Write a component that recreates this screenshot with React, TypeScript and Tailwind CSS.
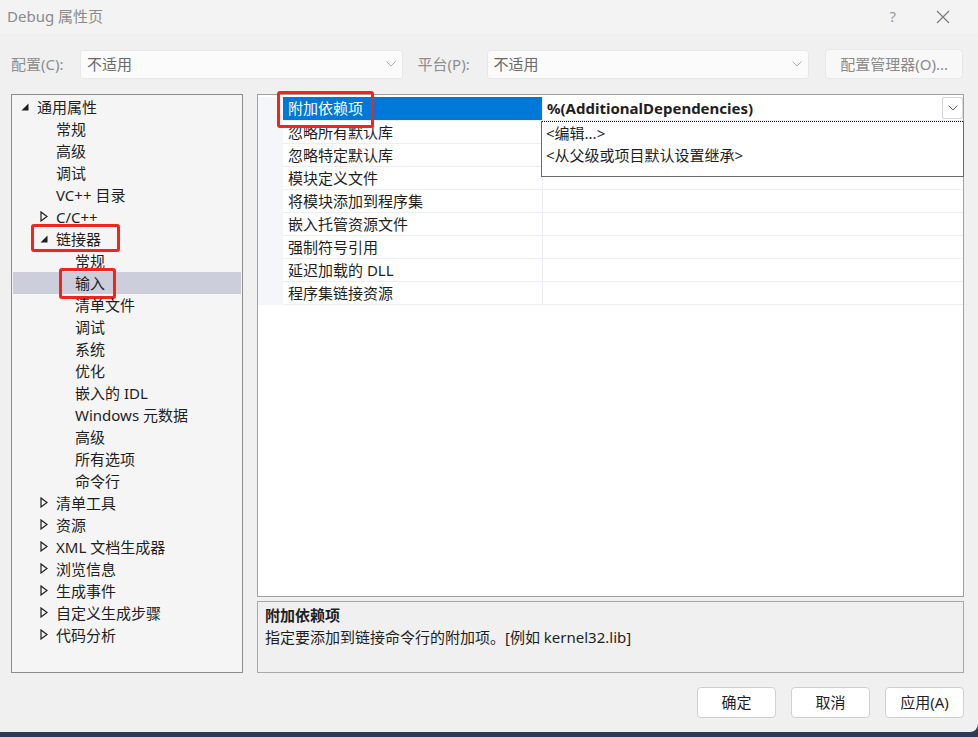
import React from "react";

const FONT = { fontFamily: '"Segoe UI", "Noto Sans", "Noto Sans CJK SC", sans-serif' };

function Expanded() {
  return (
    <svg width="8" height="8" viewBox="0 0 8 8" className="shrink-0">
      <polygon points="7.5,0.5 7.5,7.5 0.5,7.5" fill="#1e1e1e" />
    </svg>
  );
}
function Collapsed() {
  return (
    <svg width="8" height="11" viewBox="0 0 8 11" className="shrink-0">
      <polygon points="1,1 7,5.5 1,10" fill="none" stroke="#1e1e1e" strokeWidth="1.2" />
    </svg>
  );
}

function Chevron({ color = "#9a9a9a" }: { color?: string }) {
  return (
    <svg width="10" height="6" viewBox="0 0 10 6">
      <polyline points="0.5,0.5 5,5 9.5,0.5" fill="none" stroke={color} strokeWidth="1" />
    </svg>
  );
}

type Node = { label: string; level: 0 | 1 | 2; icon?: "exp" | "col"; selected?: boolean; redbox?: "link" | "input" };

const tree: Node[] = [
  { label: "通用属性", level: 0, icon: "exp" },
  { label: "常规", level: 1 },
  { label: "高级", level: 1 },
  { label: "调试", level: 1 },
  { label: "VC++ 目录", level: 1 },
  { label: "C/C++", level: 1, icon: "col" },
  { label: "链接器", level: 1, icon: "exp", redbox: "link" },
  { label: "常规", level: 2 },
  { label: "输入", level: 2, selected: true, redbox: "input" },
  { label: "清单文件", level: 2 },
  { label: "调试", level: 2 },
  { label: "系统", level: 2 },
  { label: "优化", level: 2 },
  { label: "嵌入的 IDL", level: 2 },
  { label: "Windows 元数据", level: 2 },
  { label: "高级", level: 2 },
  { label: "所有选项", level: 2 },
  { label: "命令行", level: 2 },
  { label: "清单工具", level: 1, icon: "col" },
  { label: "资源", level: 1, icon: "col" },
  { label: "XML 文档生成器", level: 1, icon: "col" },
  { label: "浏览信息", level: 1, icon: "col" },
  { label: "生成事件", level: 1, icon: "col" },
  { label: "自定义生成步骤", level: 1, icon: "col" },
  { label: "代码分析", level: 1, icon: "col" },
];

const props = [
  "附加依赖项",
  "忽略所有默认库",
  "忽略特定默认库",
  "模块定义文件",
  "将模块添加到程序集",
  "嵌入托管资源文件",
  "强制符号引用",
  "延迟加载的 DLL",
  "程序集链接资源",
];

function TreeRow({ n }: { n: Node }) {
  const textX = n.level === 0 ? 37 : n.level === 1 ? 56 : 75;
  return (
    <div className={`relative h-[22px] flex items-center ${n.selected ? "bg-[#cccedb]" : ""}`}>
      {n.icon && (
        <div
          className={`absolute flex items-center ${n.level === 0 ? "left-[8px]" : "left-[27px]"}`}
          style={{ top: n.icon === "exp" ? 7 : 5 }}
        >
          {n.icon === "exp" ? <Expanded /> : <Collapsed />}
        </div>
      )}
      <span className="absolute whitespace-nowrap text-[15px] text-[#1e1e1e]" style={{ left: textX - 13 }}>
        {n.label}
      </span>
      {n.redbox === "link" && (
        <div className="absolute left-[18px] top-[-4px] w-[89px] h-[28px] border-[3px] border-[#f0261c] rounded-[3px]" />
      )}
      {n.redbox === "input" && (
        <div className="absolute left-[46px] top-[-4px] w-[57px] h-[31px] border-[3px] border-[#f0261c] rounded-[3px]" />
      )}
    </div>
  );
}

export default function App() {
  return (
    <div className="w-[978px] h-[737px] bg-[#2c3a55] overflow-hidden" style={FONT}>
      <div className="w-[978px] h-[732px] bg-[#f0f0f0] rounded-br-[8px] flex flex-col">
        {/* Title bar */}
        <div className="h-[33px] bg-[#f3f3f3] flex items-center px-[7px] shrink-0">
          <span className="text-[15px] text-[#8b8b8b]">Debug 属性页</span>
          <div className="flex-1" />
          <span className="text-[15px] text-[#9a9a9a] mr-[40px]">?</span>
          <svg width="14" height="14" viewBox="0 0 14 14" className="mr-[21px]">
            <path d="M1 1 L13 13 M13 1 L1 13" stroke="#7a7a7a" strokeWidth="1.2" />
          </svg>
        </div>

        {/* Config row */}
        <div className="flex items-center h-[30px] mt-[16px] pl-[11px] pr-[15px] shrink-0">
          <span className="text-[15px] text-[#8d8d8d] w-[69px]">配置(C):</span>
          <div className="w-[323px] h-[29px] bg-[#fbfbfb] border border-[#e8e8e8] rounded-[3px] flex items-center justify-between px-[6px]">
            <span className="text-[15px] text-[#6a6a6a]">不适用</span>
            <Chevron color="#b0b0b0" />
          </div>
          <span className="text-[15px] text-[#8d8d8d] ml-[15px] w-[69px]">平台(P):</span>
          <div className="w-[323px] h-[29px] bg-[#fbfbfb] border border-[#e8e8e8] rounded-[3px] flex items-center justify-between px-[6px]">
            <span className="text-[15px] text-[#6a6a6a]">不适用</span>
            <Chevron color="#b0b0b0" />
          </div>
          <div className="ml-[16px] w-[138px] h-[30px] bg-[#f8f8f8] border border-[#e6e6e6] rounded-[4px] flex items-center justify-center">
            <span className="text-[15px] text-[#8a8a8a]">配置管理器(O)...</span>
          </div>
        </div>

        {/* Main */}
        <div className="flex mt-[15px] pl-[11px] pr-[14px] gap-[14px] h-[579px] shrink-0">
          {/* Tree */}
          <div className="w-[232px] border border-[#8c8c8c] bg-[#f5f5f5] pt-[1px] px-[1px]">
            {tree.map((n, i) => (
              <TreeRow key={i} n={n} />
            ))}
          </div>

          {/* Right */}
          <div className="flex-1 flex flex-col gap-[4px]">
            <div className="relative h-[503px] border border-[#a0a0a0] bg-white pt-[2px]">
              <div className="flex">
                <div className="w-[25px] bg-[#f4f6fa] shrink-0" />
                <div className="flex-1">
                  {props.map((p, i) => (
                    <div key={i} className={`flex h-[23px] ${i === 0 ? "" : "border-t border-[#eceef4]"}`}>
                      <div
                        className={`w-[259px] flex items-center pl-[5px] text-[15px] ${
                          i === 0 ? "bg-[#0078d7] text-white" : "text-[#1e1e1e]"
                        }`}
                      >
                        {p}
                      </div>
                      <div className="flex-1 border-l border-[#eceef4] flex items-center pl-[4px] relative">
                        {i === 0 && (
                          <>
                            <span className="text-[15px] font-bold text-[#1e1e1e]">%(AdditionalDependencies)</span>
                            <div className="absolute right-0 top-0 w-[21px] h-[22px] border border-[#d6d6d6] rounded-[2px] bg-white flex items-center justify-center">
                              <Chevron color="#606060" />
                            </div>
                          </>
                        )}
                      </div>
                    </div>
                  ))}
                  <div className="h-[1px] bg-[#eceef4]" />
                </div>
              </div>

              {/* Dropdown list */}
              <div className="absolute left-[283px] top-[26px] w-[423px] h-[56px] bg-white border border-[#6a6a6a] border-t-0">
                <div className="h-[1px] border-t border-dotted border-black" />
                <div className="pl-[4px] text-[15px] text-[#1e1e1e] leading-[22px]">&lt;编辑...&gt;</div>
                <div className="pl-[4px] text-[15px] text-[#1e1e1e] leading-[22px]">&lt;从父级或项目默认设置继承&gt;</div>
              </div>

              {/* Red box */}
              <div className="absolute left-[19px] top-[-4px] w-[97px] h-[37px] border-[3px] border-[#f0261c] rounded-[3px]" />
            </div>

            <div className="flex-1 border border-[#a8a8a8] bg-[#f0f0f0] px-[7px] pt-[2px]">
              <div className="text-[15px] font-bold text-[#1e1e1e] leading-[22px]">附加依赖项</div>
              <div className="text-[15px] text-[#1e1e1e] leading-[22px]">指定要添加到链接命令行的附加项。[例如 kernel32.lib]</div>
            </div>
          </div>
        </div>

        {/* Buttons */}
        <div className="flex justify-end gap-[15px] mt-[14px] pr-[14px] shrink-0">
          {["确定", "取消", "应用(A)"].map((b) => (
            <div
              key={b}
              className="w-[79px] h-[31px] bg-white border border-[#d0d0d0] rounded-[4px] flex items-center justify-center text-[15px] text-[#1e1e1e]"
            >
              {b}
            </div>
          ))}
        </div>
      </div>
    </div>
  );
}
